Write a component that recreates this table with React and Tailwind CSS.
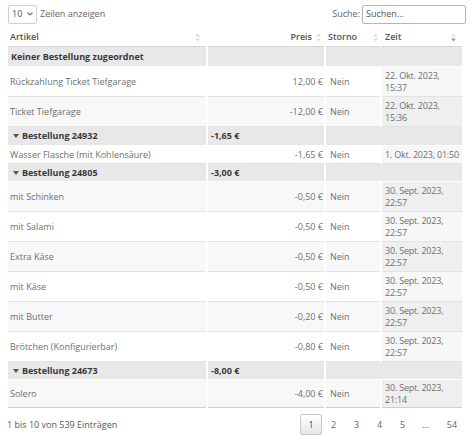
import React from "react";

const SortIcon = ({ dir }) => (
  <svg width="5" height="9" viewBox="0 0 5 9" className="inline-block">
    <path d="M0 3.5 L2.5 0.5 L5 3.5 Z" fill={dir === "asc" ? "#9a9a9a" : "#dedede"} />
    <path d="M0 5.5 L2.5 8.5 L5 5.5 Z" fill={dir === "desc" ? "#9a9a9a" : "#dedede"} />
  </svg>
);

const groups = [
  {
    title: "Keiner Bestellung zugeordnet",
    total: "",
    caret: false,
    h: "h-[20px]",
    rows: [
      { name: "Rückzahlung Ticket Tiefgarage", price: "12,00 €", date: ["22. Okt. 2023,", "15:37"] },
      { name: "Ticket Tiefgarage", price: "-12,00 €", date: ["22. Okt. 2023,", "15:36"] },
    ],
  },
  {
    title: "Bestellung 24932",
    total: "-1,65 €",
    caret: true,
    h: "h-[19px]",
    rows: [{ name: "Wasser Flasche (mit Kohlensäure)", price: "-1,65 €", date: ["1. Okt. 2023, 01:50"] }],
  },
  {
    title: "Bestellung 24805",
    total: "-3,00 €",
    caret: true,
    h: "h-[18px]",
    rows: [
      { name: "mit Schinken", price: "-0,50 €", date: ["30. Sept. 2023,", "22:57"] },
      { name: "mit Salami", price: "-0,50 €", date: ["30. Sept. 2023,", "22:57"] },
      { name: "Extra Käse", price: "-0,50 €", date: ["30. Sept. 2023,", "22:57"] },
      { name: "mit Käse", price: "-0,50 €", date: ["30. Sept. 2023,", "22:57"] },
      { name: "mit Butter", price: "-0,20 €", date: ["30. Sept. 2023,", "22:57"] },
      { name: "Brötchen (Konfigurierbar)", price: "-0,80 €", date: ["30. Sept. 2023,", "22:57"] },
    ],
  },
  {
    title: "Bestellung 24673",
    total: "-8,00 €",
    caret: true,
    h: "h-[18px]",
    rows: [{ name: "Solero", price: "-4,00 €", date: ["30. Sept. 2023,", "21:14"], last: true }],
  },
];

export default function App() {
  let idx = 0;
  return (
    <div
      className="w-[474px] h-[438px] bg-white pl-[6px] pr-[10px] text-[9px] text-[#6f6f6f] overflow-hidden"
      style={{ fontFamily: '"Open Sans", "DejaVu Sans", sans-serif' }}
    >
      {/* Top controls */}
      <div className="flex items-center justify-between h-[28px] pl-[2px]">
        <div className="flex items-center gap-[3px]">
          <div className="flex items-center justify-between w-[29px] h-[19px] border border-[#cfcfcf] rounded-[2px] px-[3px]">
            <span className="text-[#555]">10</span>
            <svg width="6" height="4" viewBox="0 0 6 4">
              <path d="M0.5 0.5 L3 3 L5.5 0.5" fill="none" stroke="#777" strokeWidth="1.2" />
            </svg>
          </div>
          <span className="text-[#666]">Zeilen anzeigen</span>
        </div>
        <div className="flex items-center gap-[2px] mr-[-2px]">
          <span className="text-[#666]">Suche:</span>
          <div className="w-[104px] h-[19px] border border-[#b5b5b5] rounded-[2px] flex items-center px-[3px] text-[#555]">
            Suchen...
          </div>
        </div>
      </div>

      {/* Table */}
      <table className="w-[458px] table-fixed border-separate border-spacing-x-[2px] border-spacing-y-0 leading-[12px]">
        <colgroup>
          <col className="w-[198px]" />
          <col className="w-[116px]" />
          <col className="w-[54px]" />
          <col className="w-[80px]" />
        </colgroup>
        <thead>
          <tr className="h-[19px] text-[#555] font-semibold">
            <th className="border-b border-[#d6d6d6] text-left font-semibold pl-[2px] pr-[6px]">
              <div className="flex items-center justify-between">
                <span>Artikel</span>
                <SortIcon />
              </div>
            </th>
            <th className="border-b border-[#d6d6d6] font-semibold pr-[3px]">
              <div className="flex items-center justify-end gap-[4px]">
                <span>Preis</span>
                <SortIcon />
              </div>
            </th>
            <th className="border-b border-[#d6d6d6] font-semibold pl-[2px] pr-[2px]">
              <div className="flex items-center justify-between">
                <span>Storno</span>
                <SortIcon />
              </div>
            </th>
            <th className="border-b border-[#d6d6d6] font-semibold pl-[3px] pr-[6px]">
              <div className="flex items-center justify-between">
                <span>Zeit</span>
                <SortIcon dir="desc" />
              </div>
            </th>
          </tr>
        </thead>
        <tbody>
          {groups.map((g) => (
            <React.Fragment key={g.title}>
              <tr className={`${g.h} font-bold text-[#3a3a3a]`}>
                <td className="bg-[#e8e8e8] pl-[3px] border-b border-white">
                  <span className="flex items-center gap-[3px]">
                    {g.caret && (
                      <svg width="6" height="4" viewBox="0 0 6 4" className="ml-[2px]">
                        <path d="M0 0 L6 0 L3 4 Z" fill="#555" />
                      </svg>
                    )}
                    {g.title}
                  </span>
                </td>
                <td className="bg-[#e8e8e8] pl-[3px] border-b border-white">{g.total}</td>
                <td className="bg-[#e8e8e8] border-b border-white" colSpan={2}></td>
              </tr>
              {g.rows.map((r) => {
                const odd = idx++ % 2 === 1;
                const rowBg = odd ? "bg-[#f8f8f8]" : "bg-white";
                const zeitBg = odd ? "bg-[#efefef]" : "bg-[#f7f7f7]";
                const tall = r.date.length > 1;
                const line = r.last ? "border-[#cfcfcf]" : "border-[#e2e2e2]";
                return (
                  <tr key={r.name} className={tall ? (r.last ? "h-[28px]" : "h-[30px]") : "h-[18px]"}>
                    <td className={`${rowBg} border-b ${line} pl-[2px] whitespace-nowrap`}>{r.name}</td>
                    <td className={`${rowBg} border-b ${line} text-right pr-[1px] whitespace-nowrap`}>{r.price}</td>
                    <td className={`${rowBg} border-b ${line} pl-[4px]`}>Nein</td>
                    <td className={`${zeitBg} border-b ${line} pl-[3px] whitespace-nowrap tracking-[-0.2px]`}>
                      {r.date.map((d) => (
                        <div key={d}>{d}</div>
                      ))}
                    </td>
                  </tr>
                );
              })}
            </React.Fragment>
          ))}
        </tbody>
      </table>

      {/* Footer */}
      <div className="flex items-center justify-between mt-[6px]">
        <span className="text-[#555] pl-[1px]">1 bis 10 von 539 Einträgen</span>
        <div className="flex items-center text-[#666] mr-[-3px]">
          <span className="w-[22px] h-[21px] flex items-center justify-center border border-[#c8c8c8] rounded-[2px] bg-gradient-to-b from-white to-[#e6e6e6] text-[#444]">
            1
          </span>
          {["2", "3", "4", "5", "…"].map((p) => (
            <span key={p} className="w-[23px] h-[21px] flex items-center justify-center">
              {p}
            </span>
          ))}
          <span className="w-[30px] h-[21px] flex items-center justify-center">54</span>
        </div>
      </div>
    </div>
  );
}
